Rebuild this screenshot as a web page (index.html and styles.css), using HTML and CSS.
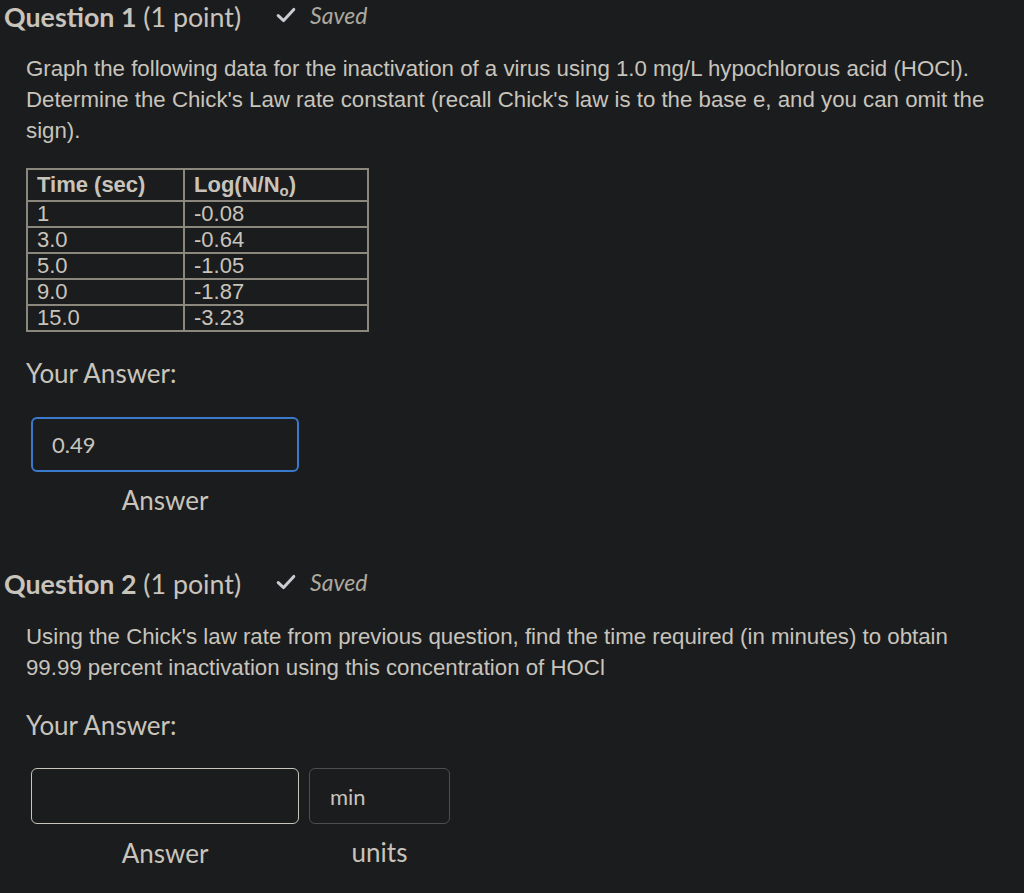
FILE: index.html
```html
<!DOCTYPE html>
<html>
<head>
<meta charset="utf-8">
<link rel="stylesheet" href="styles.css">
</head>
<body>
<section class="question q1">
  <div class="qhead">
    <h2><b>Question 1</b> (1 point)</h2>
    <span class="saved"><svg class="check" viewBox="0 0 20 16" width="20" height="16"><path d="M2.2 8.6 L7.6 13.6 L17.8 2.4" fill="none" stroke="currentColor" stroke-width="3" stroke-linecap="round" stroke-linejoin="round"/></svg><i>Saved</i></span>
  </div>
  <div class="body">
    <p class="prompt">Graph the following data for the inactivation of a virus using 1.0 mg/L hypochlorous acid (HOCl). Determine the Chick's Law rate constant (recall Chick's law is to the base e, and you can omit the sign).</p>
    <table class="data">
      <tr class="hrow"><th>Time (sec)</th><th>Log(N/N<sub>o</sub>)</th></tr>
      <tr><td>1</td><td>-0.08</td></tr>
      <tr><td>3.0</td><td>-0.64</td></tr>
      <tr><td>5.0</td><td>-1.05</td></tr>
      <tr><td>9.0</td><td>-1.87</td></tr>
      <tr><td>15.0</td><td>-3.23</td></tr>
    </table>
    <div class="your">Your Answer:</div>
    <div class="answers">
      <div class="field">
        <div class="box focus">0.49</div>
        <div class="label">Answer</div>
      </div>
    </div>
  </div>
</section>
<section class="question q2">
  <div class="qhead">
    <h2><b>Question 2</b> (1 point)</h2>
    <span class="saved"><svg class="check" viewBox="0 0 20 16" width="20" height="16"><path d="M2.2 8.6 L7.6 13.6 L17.8 2.4" fill="none" stroke="currentColor" stroke-width="3" stroke-linecap="round" stroke-linejoin="round"/></svg><i>Saved</i></span>
  </div>
  <div class="body">
    <p class="prompt">Using the Chick's law rate from previous question, find the time required (in minutes) to obtain 99.99 percent inactivation using this concentration of HOCl</p>
    <div class="your">Your Answer:</div>
    <div class="answers">
      <div class="field">
        <div class="box plain"></div>
        <div class="label">Answer</div>
      </div>
      <div class="field unit">
        <div class="box unitbox">min</div>
        <div class="label">units</div>
      </div>
    </div>
  </div>
</section>
</body>
</html>
```
FILE: styles.css
```css
html, body {
  margin: 0;
  padding: 0;
  background: #1b1c1e;
  color: #c8c4bc;
}
body {
  font-family: Lato, "Noto Sans", sans-serif;
  width: 1024px;
  height: 893px;
  overflow: hidden;
}
.question {
  padding-left: 4px;
}
.q1 {
  padding-top: 1px;
}
.q2 {
  padding-top: 53px;
}
.qhead {
  display: flex;
  align-items: center;
  height: 32px;
}
.qhead h2 {
  margin: 0;
  font-size: 26.8px;
  font-weight: 400;
  line-height: 32px;
  color: #c8c4bc;
}
.qhead h2 b {
  font-weight: 700;
}
.saved {
  margin-left: 35px;
  display: inline-flex;
  align-items: center;
  gap: 14px;
  color: #aea99f;
  font-size: 23px;
  line-height: 26px;
  padding-bottom: 4px;
}
.saved .check {
  color: #c9ccd0;
}
.saved i {
  font-style: italic;
}
.body {
  padding-left: 22px;
}
.prompt {
  margin: 20px 0 0 0;
  font-family: "Liberation Sans", Arial, sans-serif;
  font-size: 22.25px;
  line-height: 31px;
  width: 962px;
}
.q2 .prompt {
  margin-top: 21px;
}
.data {
  margin-top: 22px;
  border-collapse: collapse;
  border: 2px solid #8c877d;
  font-family: "Liberation Sans", Arial, sans-serif;
  font-size: 22px;
  width: 343px;
}
.data th, .data td {
  border: 2px solid #8c877d;
  text-align: left;
  padding: 0 0 0 9px;
  height: 24px;
  line-height: 24px;
}
.data th {
  font-weight: 700;
  height: 30px;
}
.data td:first-child, .data th:first-child {
  width: 146px;
}
.data sub {
  font-size: 15px;
  vertical-align: -4px;
  line-height: 0;
}
.your {
  margin-top: 26px;
  font-size: 26px;
  line-height: 30px;
}
.q2 .your {
  margin-top: 27px;
}
.answers {
  display: flex;
  gap: 10px;
  margin-top: 29px;
  padding-left: 5px;
}
.q2 .answers {
  margin-top: 28px;
}
.field {
  display: flex;
  flex-direction: column;
  align-items: center;
}
.box {
  box-sizing: border-box;
  width: 268px;
  height: 55px;
  border-radius: 6px;
  font-size: 22px;
  display: flex;
  align-items: center;
  padding-left: 19px;
  background: #1b1c1e;
}
.box.focus {
  border: 2px solid #3b79cc;
  height: 55px;
}
.box.plain {
  border: 1px solid #c8c4bc;
  height: 56px;
}
.box.unitbox {
  width: 141px;
  height: 56px;
  border: 1px solid #4c4f52;
  padding-left: 20px;
}
.label {
  font-size: 26px;
  line-height: 30px;
  margin-top: 13px;
}
.q2 .label {
  margin-top: 14px;
}
.q2 .unit .label {
  margin-top: 13px;
}
```
